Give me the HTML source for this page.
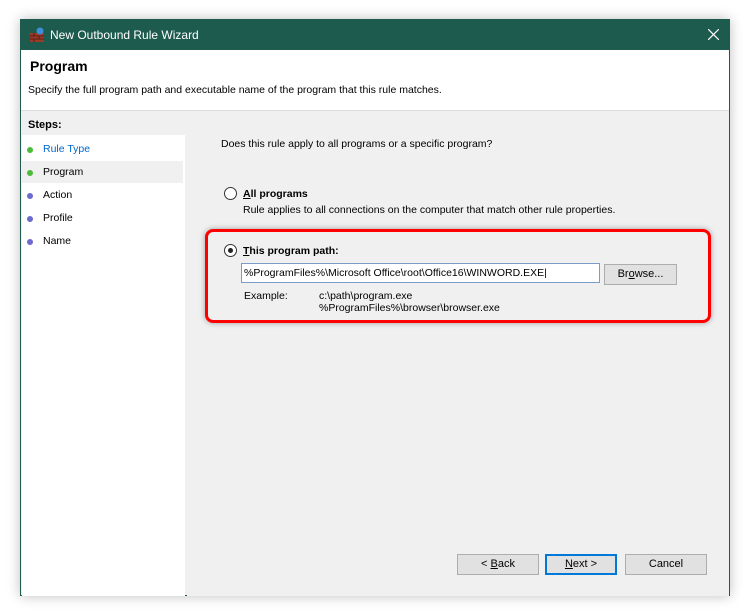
<!DOCTYPE html>
<html><head><style>
*{margin:0;padding:0;box-sizing:border-box}
body{width:750px;height:616px;background:#fff;font-family:"Liberation Sans",sans-serif;font-size:10.5px;color:#000;position:relative;overflow:hidden}
.win{position:absolute;left:20px;top:19px;width:710px;height:577px;border:1px solid #1e5a4e;background:#f0f0f0;box-shadow:0 0 12px rgba(0,0,0,.25)}
.title{position:absolute;left:0;top:0;width:100%;height:30px;background:#1d5b4f;color:#fff;font-size:12px}
.title span{position:absolute;left:29px;top:8px}
.hdr{position:absolute;left:0;top:30px;width:100%;height:61px;background:#fff;border-bottom:1px solid #ddd}
.a{position:absolute;white-space:nowrap}
.steps{position:absolute;left:1px;top:93px;width:163px;height:483px;background:#fff}
.right{position:absolute;left:166px;top:93px;width:542px;height:483px;background:#f0f0f0}
.dot{position:absolute;width:6px;height:6px;border-radius:50%}
.g{background:#4cbb3a}.p{background:#6a6ad0}
.btn{position:absolute;height:21px;background:#e1e1e1;border:1px solid #adadad;text-align:center;line-height:19px;font-size:11px}
.radio{position:absolute;width:13px;height:13px;border:1px solid #333;border-radius:50%;background:#fff}
</style></head><body>
<div class="win">
 <div class="title">
  <svg style="position:absolute;left:9px;top:7px" width="16" height="16"><rect x="0" y="6" width="14" height="9" fill="#9b3b2a"/><path d="M0 9h14M0 12h14M4 6v3M9 9v3M4 12v3" stroke="#5a1e14" stroke-width="1"/><circle cx="10" cy="4" r="3.5" fill="#3a8fd6"/></svg>
  <span>New Outbound Rule Wizard</span>
  <svg style="position:absolute;left:687px;top:9px" width="11" height="11"><path d="M0 0L11 11M11 0L0 11" stroke="#fff" stroke-width="1.2"/></svg>
 </div>
 <div class="hdr">
  <div class="a" style="left:9px;top:8px;font-size:14px;font-weight:bold">Program</div>
  <div class="a" style="left:7px;top:34px">Specify the full program path and executable name of the program that this rule matches.</div>
 </div>
 <div class="steps">
  <div style="position:absolute;left:0;top:0;width:163px;height:22px;background:#f0f0f0"></div>
  <div class="a" style="left:6px;top:6px;font-weight:bold;font-size:11px">Steps:</div>
  <div class="dot g" style="left:5px;top:34px"></div><div class="a" style="left:21px;top:30px;color:#0066cc">Rule Type</div>
  <div style="position:absolute;left:0;top:48px;width:161px;height:22px;background:#f0f0f0"></div>
  <div class="dot g" style="left:5px;top:57px"></div><div class="a" style="left:21px;top:53px">Program</div>
  <div class="dot p" style="left:5px;top:80px"></div><div class="a" style="left:21px;top:76px">Action</div>
  <div class="dot p" style="left:5px;top:103px"></div><div class="a" style="left:21px;top:99px">Profile</div>
  <div class="dot p" style="left:5px;top:126px"></div><div class="a" style="left:21px;top:122px">Name</div>
 </div>
 <div class="right">
  <div class="a" style="left:34px;top:25px">Does this rule apply to all programs or a specific program?</div>
  <div class="radio" style="left:37px;top:74px"></div>
  <div class="a" style="left:56px;top:75px;font-weight:bold"><u>A</u>ll programs</div>
  <div class="a" style="left:56px;top:91px">Rule applies to all connections on the computer that match other rule properties.</div>
  <div style="position:absolute;left:18px;top:116px;width:506px;height:94px;border:3px solid #f00;border-radius:8px;box-shadow:0 0 6px rgba(0,0,0,.35)"></div>
  <div class="radio" style="left:37px;top:131px"><div style="position:absolute;left:3px;top:3px;width:5px;height:5px;border-radius:50%;background:#222"></div></div>
  <div class="a" style="left:56px;top:132px;font-weight:bold"><u>T</u>his program path:</div>
  <div style="position:absolute;left:54px;top:150px;width:359px;height:20px;background:#fff;border:1px solid #7a9cc6"></div>
  <div class="a" style="left:57px;top:154px">%ProgramFiles%\Microsoft Office\root\Office16\WINWORD.EXE|</div>
  <div class="btn" style="left:417px;top:151px;width:73px">Br<u>o</u>wse...</div>
  <div class="a" style="left:57px;top:177px">Example:</div>
  <div class="a" style="left:132px;top:177px">c:\path\program.exe</div>
  <div class="a" style="left:132px;top:189px">%ProgramFiles%\browser\browser.exe</div>
  <div class="btn" style="left:270px;top:441px;width:82px">&lt; <u>B</u>ack</div>
  <div class="btn" style="left:358px;top:441px;width:72px;border:2px solid #0078d7;line-height:17px"><u>N</u>ext &gt;</div>
  <div class="btn" style="left:438px;top:441px;width:82px">Cancel</div>
 </div>
</div>
</body></html>
